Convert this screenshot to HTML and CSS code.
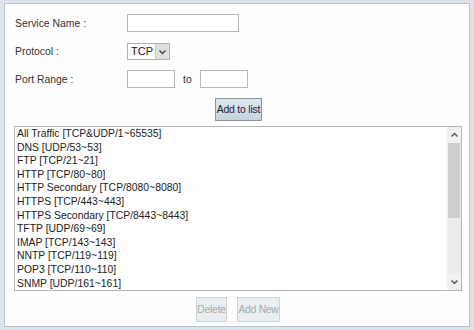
FILE: index.html
```html
<!DOCTYPE html>
<html>
<head>
<meta charset="utf-8">
<link rel="stylesheet" href="styles.css">
</head>
<body>
<div class="panel">
  <div class="row row-name">
    <span class="label">Service Name :</span>
    <span class="input input-name"></span>
  </div>
  <div class="row row-proto">
    <span class="label">Protocol :</span>
    <span class="select">
      <span class="select-text">TCP</span>
      <span class="select-btn">
        <svg width="9" height="6" viewBox="0 0 9 6"><polyline points="1.5,1.5 4.5,4.5 7.5,1.5" fill="none" stroke="#444" stroke-width="1.4"/></svg>
      </span>
    </span>
  </div>
  <div class="row row-port">
    <span class="label">Port Range :</span>
    <span class="input input-port"></span>
    <span class="to">to</span>
    <span class="input input-port"></span>
  </div>
  <div class="row row-add">
    <span class="btn btn-add">Add to list</span>
  </div>
  <div class="listbox">
    <div class="items">
      <div class="item">All Traffic [TCP&amp;UDP/1~65535]</div>
      <div class="item">DNS [UDP/53~53]</div>
      <div class="item">FTP [TCP/21~21]</div>
      <div class="item">HTTP [TCP/80~80]</div>
      <div class="item">HTTP Secondary [TCP/8080~8080]</div>
      <div class="item">HTTPS [TCP/443~443]</div>
      <div class="item">HTTPS Secondary [TCP/8443~8443]</div>
      <div class="item">TFTP [UDP/69~69]</div>
      <div class="item">IMAP [TCP/143~143]</div>
      <div class="item">NNTP [TCP/119~119]</div>
      <div class="item">POP3 [TCP/110~110]</div>
      <div class="item">SNMP [UDP/161~161]</div>
    </div>
    <div class="scrollbar">
      <span class="sb-arrow">
        <svg width="9" height="6" viewBox="0 0 9 6"><polyline points="1.5,4.5 4.5,1.5 7.5,4.5" fill="none" stroke="#555" stroke-width="1.4"/></svg>
      </span>
      <span class="sb-thumb"></span>
      <span class="sb-track"></span>
      <span class="sb-arrow">
        <svg width="9" height="6" viewBox="0 0 9 6"><polyline points="1.5,1.5 4.5,4.5 7.5,1.5" fill="none" stroke="#555" stroke-width="1.4"/></svg>
      </span>
    </div>
  </div>
  <div class="actions">
    <span class="btn btn-disabled btn-delete">Delete</span>
    <span class="btn btn-disabled btn-new">Add New</span>
  </div>
</div>
</body>
</html>
```

FILE: styles.css
```css
html, body {
  margin: 0;
  padding: 0;
}
body {
  width: 474px;
  height: 330px;
  background: #dce3ea;
  font-family: "Liberation Sans", Arial, sans-serif;
  font-size: 10.4px;
  color: #2b2b2b;
  overflow: hidden;
}
.panel {
  box-sizing: border-box;
  margin: 3px 0 0 4px;
  width: 466px;
  height: 324px;
  background: #fefefe;
  border: 1px solid #b9c3cd;
  padding: 10px 0 0 9px;
}
.row {
  display: flex;
  align-items: center;
}
.row-name { height: 18px; }
.row-proto { height: 17px; margin-top: 11px; }
.row-port { height: 18px; margin-top: 10px; }
.row-add { height: 23px; margin-top: 10px; padding-left: 201px; }
.label {
  width: 113px;
  padding-left: 1px;
  box-sizing: border-box;
  color: #333;
}
.input {
  box-sizing: border-box;
  height: 18px;
  border: 1px solid #b4b9c0;
  background: #fff;
}
.input-name { width: 112px; }
.input-port { width: 48px; }
.to {
  width: 25px;
  padding-left: 8px;
  box-sizing: border-box;
  color: #333;
}
.select {
  box-sizing: border-box;
  display: flex;
  width: 43px;
  height: 17px;
  border: 1px solid #aeb3ba;
  background: #fff;
}
.select-text {
  flex: 1;
  padding-left: 3px;
  line-height: 15px;
  font-size: 11px;
  color: #222;
}
.select-btn {
  width: 13px;
  background: #dedfe1;
  border-left: 1px solid #c4c7cb;
  display: flex;
  align-items: center;
  justify-content: center;
}
.btn {
  box-sizing: border-box;
  display: flex;
  align-items: center;
  justify-content: center;
  white-space: nowrap;
  letter-spacing: -0.2px;
}
.btn-add {
  width: 47px;
  height: 23px;
  border: 1px solid #8b939c;
  background: linear-gradient(#dfe7f0, #c6d2df);
  color: #1f1f1f;
}
.listbox {
  box-sizing: border-box;
  margin-top: 5px;
  width: 448px;
  height: 165px;
  border: 1px solid #b3b8be;
  background: #fff;
  display: flex;
}
.items {
  flex: 1;
  padding-left: 2px;
  overflow: hidden;
}
.item {
  line-height: 13.6px;
  height: 13.6px;
  white-space: nowrap;
  color: #222;
}
.scrollbar {
  width: 14px;
  display: flex;
  flex-direction: column;
  background: #ececec;
}
.sb-arrow {
  height: 16px;
  display: flex;
  align-items: center;
  justify-content: center;
  background: #f1f1f1;
}
.sb-thumb {
  height: 75px;
  margin: 0 1px;
  background: #cdcdcd;
}
.sb-track {
  flex: 1;
}
.actions {
  width: 448px;
  margin-top: 6px;
  display: flex;
  justify-content: center;
  gap: 10px;
}
.btn-disabled {
  height: 25px;
  border: 1px solid #cfd4d9;
  background: #e9eef3;
  color: #a2a9b0;
}
.btn-delete { width: 31px; }
.btn-new { width: 43px; letter-spacing: -0.3px; }
```
